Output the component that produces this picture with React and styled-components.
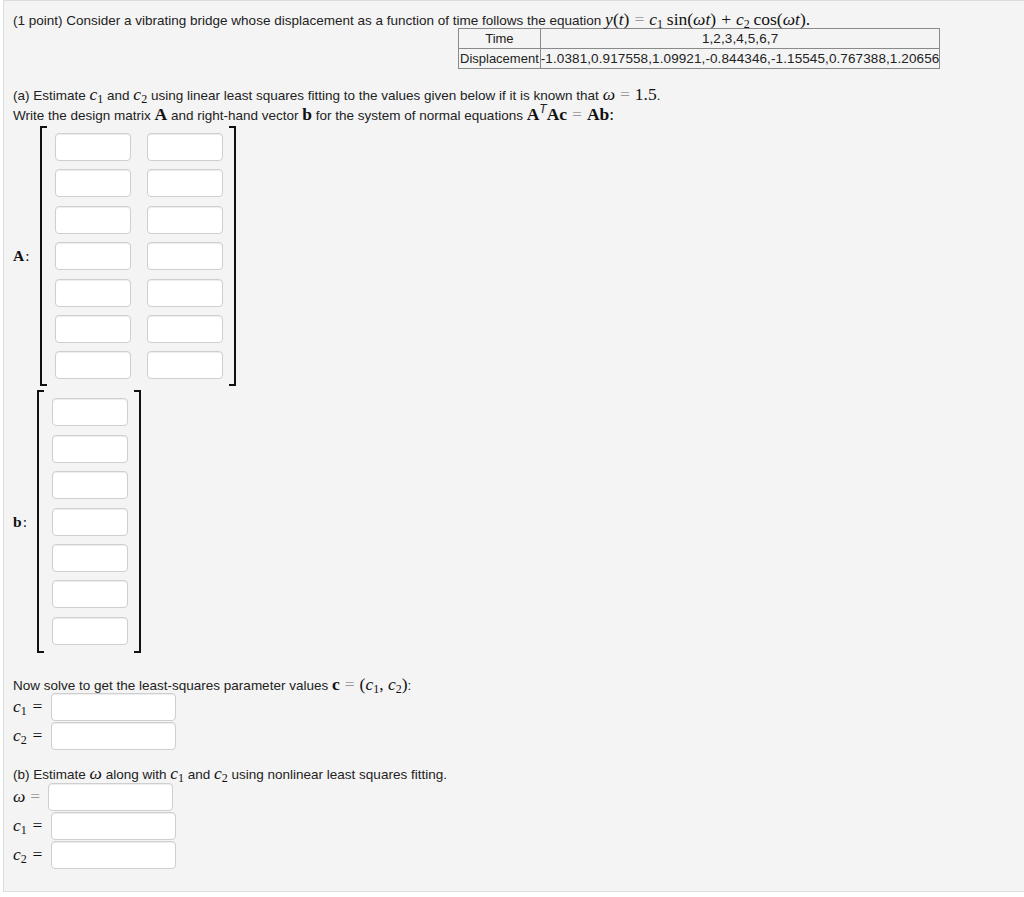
import styled, { createGlobalStyle } from "styled-components";

const GlobalStyle = createGlobalStyle`
  html, body {
    margin: 0;
    background: #ffffff;
    overflow: hidden;
  }
  body {
    font-family: "Liberation Sans", Arial, sans-serif;
    font-size: 13.5px;
    color: #222;
  }
`;

const Panel = styled.div`
  margin-left: 3px;
  width: 1040px;
  min-height: 892px;
  box-sizing: border-box;
  background: #f4f4f4;
  border: 1px solid #dcdcdc;
  padding: 9px 9px 20px 9px;
`;

const Line = styled.div`
  line-height: ${({ $lh }) => $lh || 20}px;
  height: ${({ $lh }) => $lh || 20}px;
  margin-top: ${({ $mt }) => $mt || 0}px;
  white-space: nowrap;
`;

const M = styled.span`
  font-family: "Liberation Serif", "Times New Roman", serif;
  font-size: 17.5px;
  font-style: ${({ $up }) => ($up ? "normal" : "italic")};
  font-weight: ${({ $bold }) => ($bold ? 700 : 400)};
  color: #111;
`;

const Sub = styled.sub`
  font-size: 12px;
  font-style: normal;
  vertical-align: -3px;
  line-height: 0;
`;

const Sup = styled.sup`
  font-size: 12px;
  font-style: italic;
  vertical-align: 7px;
  line-height: 0;
`;

const Op = styled.span`
  font-family: "Liberation Serif", "Times New Roman", serif;
  font-size: 17.5px;
  color: ${({ $light }) => ($light ? "#999" : "#111")};
  margin: 0 ${({ $gap }) => ($gap ?? 5)}px;
`;

const DataTable = styled.table`
  margin: 0 0 0 445px;
  border-collapse: collapse;
  color: #222;

  td {
    border: 1px solid #8a8a8a;
    padding: 0;
    height: 19px;
    line-height: 19px;
    font-size: 13.5px;
    letter-spacing: 0.1px;
    text-align: center;
    white-space: nowrap;
  }

  td:first-child {
    font-size: 13px;
    letter-spacing: 0;
    padding: 0 1px;
  }
`;

const MatrixRow = styled.div`
  display: flex;
  align-items: center;
  margin-top: ${({ $mt }) => $mt || 0}px;
`;

const MatrixLabel = styled.span`
  font-family: "Liberation Serif", "Times New Roman", serif;
  font-weight: 700;
  font-size: 15.5px;
  color: #111;
  margin-right: 10px;

  em {
    font-weight: 400;
    font-style: normal;
    margin-left: 1px;
  }
`;

const Bracket = styled.span`
  align-self: stretch;
  width: 5px;
  border: 2px solid #111;
  ${({ $side }) =>
    $side === "left" ? "border-right: none;" : "border-left: none;"}
`;

const Cells = styled.div`
  display: grid;
  grid-template-columns: repeat(${({ $cols }) => $cols}, 76px);
  column-gap: 16px;
  row-gap: 8.4px;
  padding: ${({ $pad }) => $pad};
`;

const Field = styled.input`
  box-sizing: border-box;
  width: ${({ $w }) => $w || 76}px;
  height: ${({ $h }) => $h || 28}px;
  background: #fff;
  border: 1px solid #cfcfcf;
  border-radius: 4px;
  box-shadow: inset 0 1px 1px rgba(0, 0, 0, 0.075);
  margin: 0;
  padding: 4px 6px;
  font: inherit;
`;

const AnswerRow = styled.div`
  display: flex;
  align-items: center;
  height: 28px;
  margin-top: ${({ $mt }) => $mt ?? 1}px;
`;

const AnswerLabel = styled.span`
  display: inline-block;
  width: ${({ $w }) => $w || 39}px;
  white-space: nowrap;
`;

function C({ n }) {
  return (
    <M>
      c<Sub>{n}</Sub>
    </M>
  );
}

function Answer({ label, labelWidth, mt }) {
  return (
    <AnswerRow $mt={mt}>
      <AnswerLabel $w={labelWidth}>{label}</AnswerLabel>
      <Field $w={125} $h={28} />
    </AnswerRow>
  );
}

export default function App() {
  const aRows = Array.from({ length: 14 });
  const bRows = Array.from({ length: 7 });

  return (
    <>
      <GlobalStyle />
      <Panel>
        <Line $lh={18}>
          (1 point) Consider a vibrating bridge whose displacement as a function of
          time follows the equation <M>y</M>
          <M $up>(</M>
          <M>t</M>
          <M $up>)</M>
          <Op $light>=</Op>
          <C n={1} /> <M $up>sin(</M>
          <M>ωt</M>
          <M $up>)</M>
          <Op>+</Op>
          <C n={2} /> <M $up>cos(</M>
          <M>ωt</M>
          <M $up>).</M>
        </Line>

        <DataTable>
          <tbody>
            <tr>
              <td>Time</td>
              <td>1,2,3,4,5,6,7</td>
            </tr>
            <tr>
              <td>Displacement</td>
              <td>-1.0381,0.917558,1.09921,-0.844346,-1.15545,0.767388,1.20656</td>
            </tr>
          </tbody>
        </DataTable>

        <Line $mt={15}>
          (a) Estimate <C n={1} /> and <C n={2} /> using linear least squares fitting to
          the values given below if it is known that <M>ω</M>
          <Op $light>=</Op>
          <M $up>1.5</M>.
        </Line>
        <Line>
          Write the design matrix <M $up $bold>A</M> and right-hand vector{" "}
          <M $up $bold>b</M> for the system of normal equations{" "}
          <M $up $bold>A</M>
          <Sup>T</Sup>
          <M $up $bold>Ac</M>
          <Op $light>=</Op>
          <M $up $bold>Ab</M>
          <M $up>:</M>
        </Line>

        <MatrixRow $mt={2}>
          <MatrixLabel>
            A<em>:</em>
          </MatrixLabel>
          <Bracket $side="left" />
          <Cells $cols={2} $pad="7px 6px 7px 8px">
            {aRows.map((_, i) => (
              <Field key={i} />
            ))}
          </Cells>
          <Bracket $side="right" />
        </MatrixRow>

        <MatrixRow $mt={4}>
          <MatrixLabel>
            b<em>:</em>
          </MatrixLabel>
          <Bracket $side="left" />
          <Cells $cols={1} $pad="8px 6px 8px 8px">
            {bRows.map((_, i) => (
              <Field key={i} />
            ))}
          </Cells>
          <Bracket $side="right" />
        </MatrixRow>

        <Line $mt={21}>
          Now solve to get the least-squares parameter values <M $up $bold>c</M>
          <Op $light>=</Op>
          <M $up>(</M>
          <C n={1} />
          <M $up>, </M>
          <C n={2} />
          <M $up>)</M>:
        </Line>
        <Answer
          mt={-1}
          labelWidth={38}
          label={
            <>
              <C n={1} /> <Op $gap={2}>=</Op>
            </>
          }
        />
        <Answer
          labelWidth={38}
          label={
            <>
              <C n={2} /> <Op $gap={2}>=</Op>
            </>
          }
        />

        <Line $mt={13}>
          (b) Estimate <M>ω</M> along with <C n={1} /> and <C n={2} /> using nonlinear
          least squares fitting.
        </Line>
        <Answer
          mt={0}
          labelWidth={35}
          label={
            <>
              <M>ω</M> <Op $light $gap={1}>=</Op>
            </>
          }
        />
        <Answer
          labelWidth={38}
          label={
            <>
              <C n={1} /> <Op $gap={2}>=</Op>
            </>
          }
        />
        <Answer
          labelWidth={38}
          label={
            <>
              <C n={2} /> <Op $gap={2}>=</Op>
            </>
          }
        />
      </Panel>
    </>
  );
}
